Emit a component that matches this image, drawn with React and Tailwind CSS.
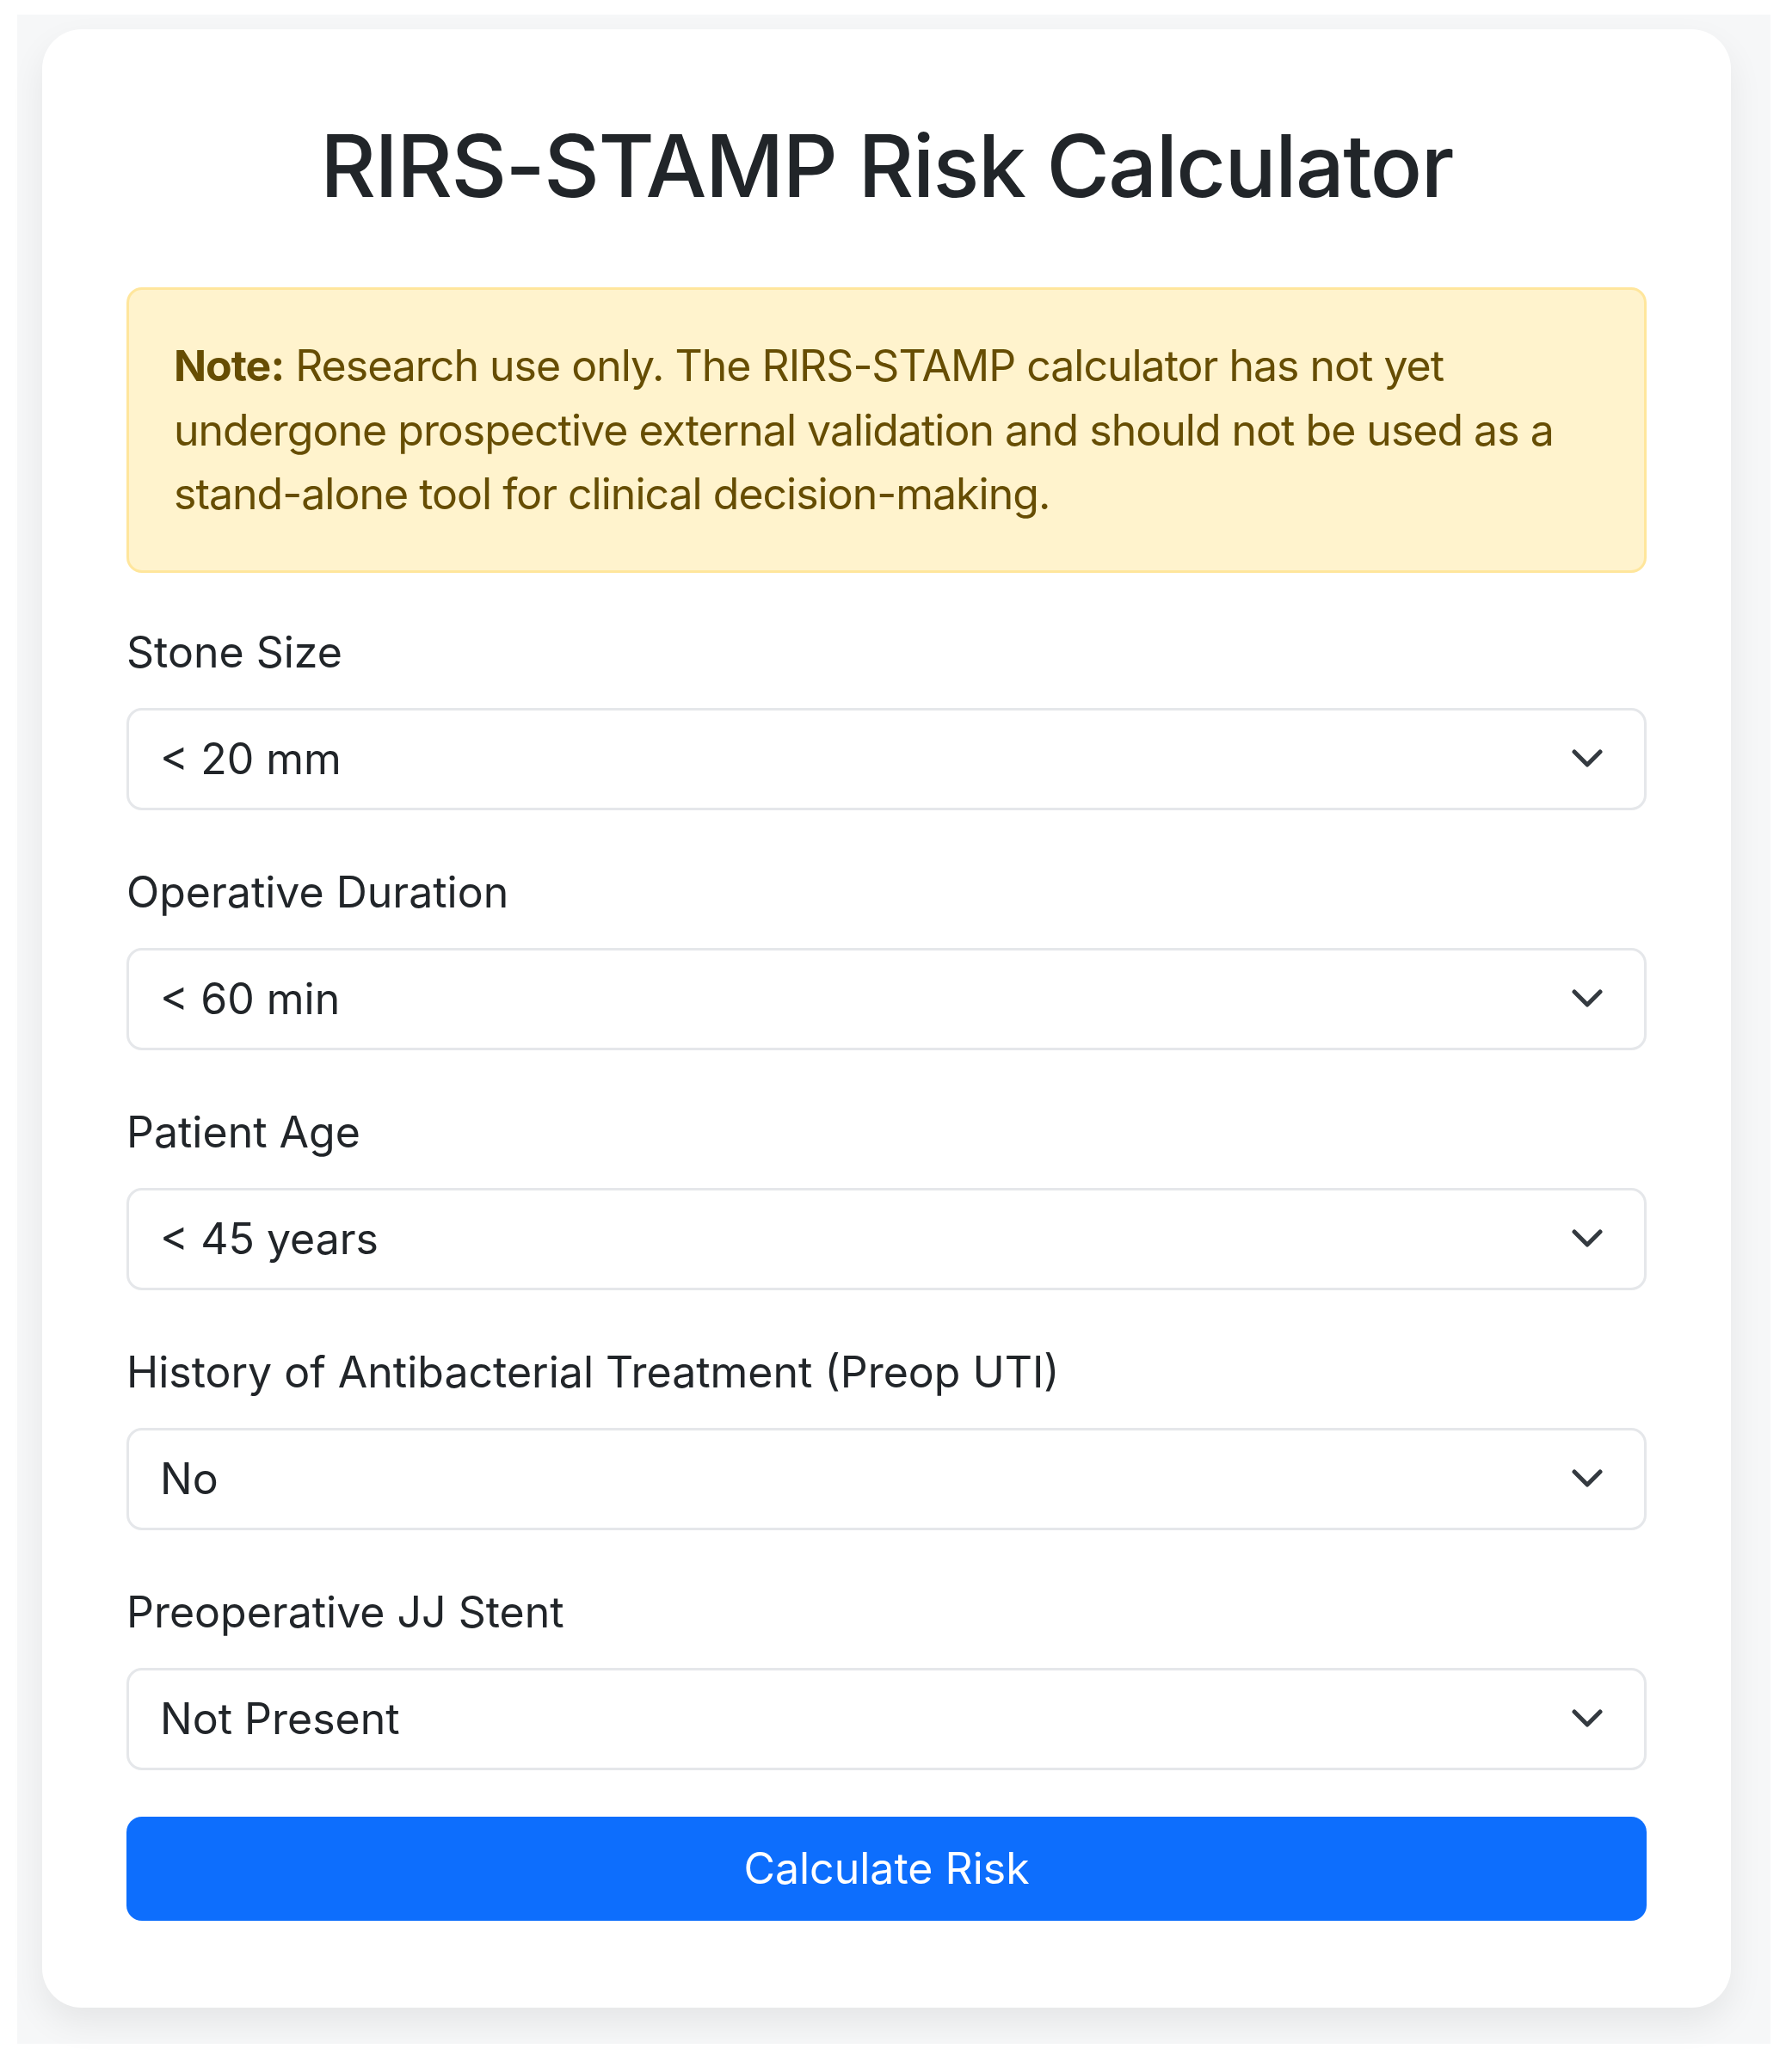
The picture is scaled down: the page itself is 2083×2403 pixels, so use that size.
import { useState } from 'react';

const fields = [
  { id: 'stone', label: 'Stone Size', options: ['< 20 mm', '≥ 20 mm'] },
  { id: 'duration', label: 'Operative Duration', options: ['< 60 min', '≥ 60 min'] },
  { id: 'age', label: 'Patient Age', options: ['< 45 years', '≥ 45 years'] },
  { id: 'uti', label: 'History of Antibacterial Treatment (Preop UTI)', options: ['No', 'Yes'] },
  { id: 'stent', label: 'Preoperative JJ Stent', options: ['Not Present', 'Present'] },
];

function Chevron() {
  return (
    <svg width="36" height="22" viewBox="0 0 36 22" fill="none" className="shrink-0">
      <path d="M3 3l15 15L33 3" stroke="#343a40" strokeWidth="5" strokeLinecap="round" strokeLinejoin="round" />
    </svg>
  );
}

function SelectField({ field, value, onChange, first }) {
  return (
    <div className={first ? 'mt-[55px]' : 'mt-[58px]'}>
      <label className="block text-[50px] leading-[74px] text-[#212529]">{field.label}</label>
      <div className="relative mt-[28px]">
        <select
          value={value}
          onChange={(e) => onChange(field.id, e.target.value)}
          className="block w-full h-[119px] appearance-none rounded-[18px] border-[3px] border-[#e5e7ea] bg-white pl-[36px] pr-[110px] text-[50px] text-[#212529] outline-none"
        >
          {field.options.map((opt) => (
            <option key={opt} value={opt}>{opt}</option>
          ))}
        </select>
        <div className="pointer-events-none absolute right-[51px] top-1/2 -translate-y-1/2 flex">
          <Chevron />
        </div>
      </div>
    </div>
  );
}

export default function App() {
  const [values, setValues] = useState(
    Object.fromEntries(fields.map((f) => [f.id, f.options[0]]))
  );

  const handleChange = (id, v) => {
    setValues({ ...values, [id]: v });
  };

  return (
    <div className="min-h-screen bg-white pt-[17px] pl-[20px] font-['Inter','Liberation_Sans',sans-serif]">
      <div className="w-[2038px] h-[2359px] bg-[#f6f7f8] pt-[17px] pl-[29px]">
        {/* Card */}
        <div className="w-[1963px] h-[2300px] rounded-[46px] bg-white shadow-[0_18px_40px_rgba(0,0,0,0.07)] px-[98px] pt-[96px]">
          <h1 className="text-center text-[100px] leading-[125px] font-medium tracking-[-1.5px] text-[#212529]">
            RIRS-STAMP Risk Calculator
          </h1>

          <div className="mt-[79px] rounded-[18px] border-[3px] border-[#ffe69c] bg-[#fff3cd] px-[52px] py-[51px] text-[50px] leading-[74.5px] tracking-[-1px] text-[#664d03]">
            <strong className="font-bold">Note:</strong> Research use only. The RIRS-STAMP calculator has not yet
            undergone prospective external validation and should not be used as a stand-alone tool for
            clinical decision-making.
          </div>

          {fields.map((f, i) => (
            <SelectField key={f.id} field={f} value={values[f.id]} onChange={handleChange} first={i === 0} />
          ))}

          <button className="mt-[54px] w-full h-[121px] rounded-[18px] bg-[#0d6efd] text-[50px] text-white">
            Calculate Risk
          </button>
        </div>
      </div>
    </div>
  );
}
